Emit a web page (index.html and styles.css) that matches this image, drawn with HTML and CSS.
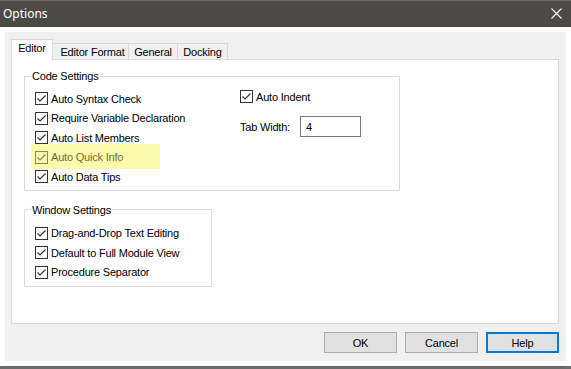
FILE: index.html
```html
<!DOCTYPE html>
<html>
<head>
<meta charset="utf-8">
<link rel="stylesheet" href="styles.css">
</head>
<body>
<div class="window">
  <div class="titlebar">
    <span class="title">Options</span>
    <svg class="close" width="11" height="11" viewBox="0 0 11 11"><path d="M0.5 0.5 L10.5 10.5 M10.5 0.5 L0.5 10.5" stroke="#fff" stroke-width="1.1" fill="none"/></svg>
  </div>
  <div class="frame">
    <div class="tabs">
      <div class="tab sel t-editor">Editor</div>
      <div class="tab t-format">Editor Format</div>
      <div class="tab t-general">General</div>
      <div class="tab t-docking">Docking</div>
    </div>
    <div class="panel">
      <fieldset class="group code">
        <legend>Code Settings</legend>
        <div class="cols">
          <div class="col left">
            <div class="row"><span class="cb"><svg width="13" height="13" viewBox="0 0 13 13"><polyline points="2.5,6.5 5,9 10.5,3.5" fill="none" stroke="#333" stroke-width="1.2"/></svg></span><span class="lbl">Auto Syntax Check</span></div>
            <div class="row"><span class="cb"><svg width="13" height="13" viewBox="0 0 13 13"><polyline points="2.5,6.5 5,9 10.5,3.5" fill="none" stroke="#333" stroke-width="1.2"/></svg></span><span class="lbl">Require Variable Declaration</span></div>
            <div class="row"><span class="cb"><svg width="13" height="13" viewBox="0 0 13 13"><polyline points="2.5,6.5 5,9 10.5,3.5" fill="none" stroke="#333" stroke-width="1.2"/></svg></span><span class="lbl">Auto List Members</span></div>
            <div class="row hl"><span class="cb"><svg width="13" height="13" viewBox="0 0 13 13"><polyline points="2.5,6.5 5,9 10.5,3.5" fill="none" stroke="#8a8a5a" stroke-width="1.2"/></svg></span><span class="lbl">Auto Quick Info</span></div>
            <div class="row"><span class="cb"><svg width="13" height="13" viewBox="0 0 13 13"><polyline points="2.5,6.5 5,9 10.5,3.5" fill="none" stroke="#333" stroke-width="1.2"/></svg></span><span class="lbl">Auto Data Tips</span></div>
          </div>
          <div class="col right">
            <div class="row"><span class="cb"><svg width="13" height="13" viewBox="0 0 13 13"><polyline points="2.5,6.5 5,9 10.5,3.5" fill="none" stroke="#333" stroke-width="1.2"/></svg></span><span class="lbl">Auto Indent</span></div>
            <div class="tabwidth"><span class="tw-label">Tab Width:</span><span class="input">4</span></div>
          </div>
        </div>
      </fieldset>
      <fieldset class="group winset">
        <legend>Window Settings</legend>
        <div class="col left">
          <div class="row"><span class="cb"><svg width="13" height="13" viewBox="0 0 13 13"><polyline points="2.5,6.5 5,9 10.5,3.5" fill="none" stroke="#333" stroke-width="1.2"/></svg></span><span class="lbl">Drag-and-Drop Text Editing</span></div>
          <div class="row"><span class="cb"><svg width="13" height="13" viewBox="0 0 13 13"><polyline points="2.5,6.5 5,9 10.5,3.5" fill="none" stroke="#333" stroke-width="1.2"/></svg></span><span class="lbl">Default to Full Module View</span></div>
          <div class="row"><span class="cb"><svg width="13" height="13" viewBox="0 0 13 13"><polyline points="2.5,6.5 5,9 10.5,3.5" fill="none" stroke="#333" stroke-width="1.2"/></svg></span><span class="lbl">Procedure Separator</span></div>
        </div>
      </fieldset>
    </div>
    <div class="buttons">
      <div class="btn">OK</div>
      <div class="btn">Cancel</div>
      <div class="btn default">Help</div>
    </div>
  </div>
  <div class="edge"></div>
</div>
</body>
</html>
```

FILE: styles.css
```css
* { box-sizing: border-box; }
html, body { margin: 0; padding: 0; }
body {
  width: 571px;
  height: 369px;
  overflow: hidden;
  background: #fff;
  font-family: "Liberation Sans", Arial, sans-serif;
  font-size: 11px;
  letter-spacing: -0.2px;
  color: #000;
}
.window {
  width: 571px;
  height: 369px;
  display: flex;
  flex-direction: column;
}
.titlebar {
  height: 27px;
  flex: none;
  background: #4b4a47;
  border-top: 1px solid #6a6a68;
  display: flex;
  align-items: center;
  justify-content: space-between;
  padding: 0 9px 0 3px;
}
.title {
  font-family: "Noto Sans", "Liberation Sans", sans-serif;
  font-size: 12px;
  letter-spacing: 0;
  color: #fff;
  margin-top: -1px;
}
.close { display: block; margin-top: -2px; }
.frame {
  height: 339px;
  flex: none;
  background: #f0f0f0;
  border: 5px solid #fff;
  padding: 7px 7px 0 6px;
  display: flex;
  flex-direction: column;
}
.edge {
  height: 3px;
  flex: none;
  background: #6b6b6b;
}
.tabs {
  display: flex;
  align-items: flex-end;
  height: 21px;
  margin-bottom: -1px;
}
.tab {
  height: 16px;
  margin-bottom: 1px;
  background: #f0f0f0;
  border-top: 1px solid #d9d9d9;
  border-right: 1px solid #d9d9d9;
  display: flex;
  align-items: center;
  justify-content: center;
  line-height: 13px;
  padding-top: 1px;
}
.tab.sel {
  height: 21px;
  margin-bottom: 0;
  background: #fff;
  border-left: 1px solid #d9d9d9;
  position: relative;
  z-index: 1;
  padding-top: 0;
  padding-bottom: 3px;
}
.t-editor { width: 42px; }
.t-format { width: 76px; padding-left: 4px; }
.t-general { width: 49px; }
.t-docking { width: 50px; }
.panel {
  height: 265px;
  flex: none;
  background: #fff;
  border: 1px solid #d9d9d9;
  padding: 10px 0 0 12px;
}
.group {
  margin: 0;
  border: 1px solid #dcdcdc;
  padding: 0 0 0 6px;
  min-inline-size: 0;
}
.group legend {
  padding: 0 1px;
  line-height: 12px;
}
.code {
  width: 376px;
  padding-bottom: 3px;
}
.winset {
  width: 188px;
  margin-top: 13px;
  padding-bottom: 4px;
}
.cols {
  display: grid;
  grid-template-columns: 209px 1fr;
}
.col.left {
  padding-top: 7px;
  padding-left: 4px;
}
.winset .col.left { padding-top: 8px; }
.col.right { padding-top: 5px; }
.row {
  height: 19.5px;
  display: flex;
  align-items: center;
  gap: 3px;
}
.cb {
  width: 13px;
  height: 13px;
  flex: none;
  border: 1px solid #333;
  background: #fff;
  display: block;
}
.cb svg {
  display: block;
  margin: -1px;
}
.row.hl {
  position: relative;
  color: #6e6e40;
}
.row.hl::before {
  content: "";
  position: absolute;
  left: -4px;
  top: -4px;
  width: 129px;
  height: 25px;
  background: #fbfbad;
}
.row.hl .cb {
  border-color: #8a8a5a;
  background: transparent;
  position: relative;
}
.row.hl .lbl { position: relative; }
.tabwidth {
  display: flex;
  align-items: center;
  margin-top: 9.5px;
}
.tw-label { width: 60px; }
.input {
  width: 61px;
  height: 21px;
  border: 1px solid #7a7a7a;
  background: #fff;
  padding-left: 5px;
  display: flex;
  align-items: center;
}
.buttons {
  display: flex;
  justify-content: flex-end;
  gap: 8px;
  margin-top: 8px;
}
.btn {
  width: 73px;
  height: 21px;
  background: #e1e1e1;
  border: 1px solid #adadad;
  display: flex;
  align-items: center;
  justify-content: center;
}
.btn.default {
  border: 2px solid #0078d7;
}
```
